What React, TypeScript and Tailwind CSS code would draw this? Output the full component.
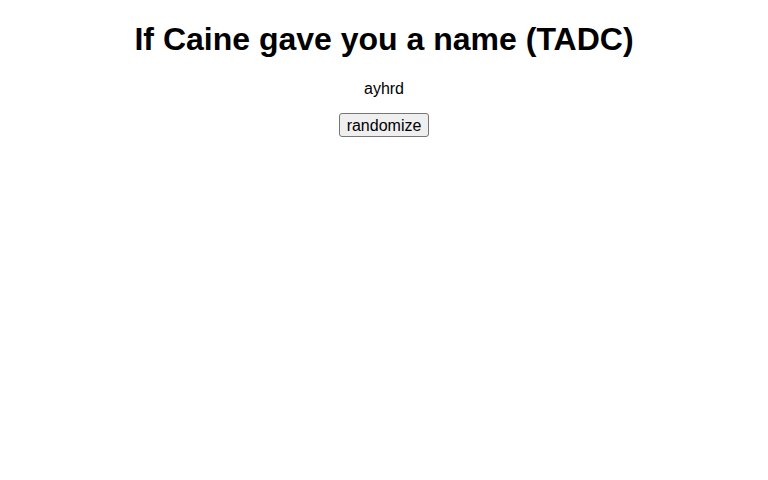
import React, { useState } from "react";

export default function App() {
  const [name, setName] = useState("ayhrd");
  const randomize = () => {
    const letters = "abcdefghijklmnopqrstuvwxyz";
    let s = "";
    for (let i = 0; i < 5; i++) s += letters[Math.floor(Math.random() * 26)];
    setName(s);
  };
  return (
    <div className="text-center text-black bg-white min-h-screen flow-root" style={{ fontFamily: '"Liberation Sans", Arial, sans-serif' }}>
      <h1 className="text-[32px] leading-[37px] font-bold mt-[21.44px] mb-[21.44px]">If Caine gave you a name (TADC)</h1>
      <p className="text-base leading-[18.4px] mt-[21.44px] mb-[15px]">{name}</p>
      <button
        onClick={randomize}
        className="text-base leading-[20px] h-[24px] px-[7px] pt-[2px] pb-0 bg-[#efefef] border border-[#767676] rounded-[3px] text-black"
      >
        randomize
      </button>
    </div>
  );
}
